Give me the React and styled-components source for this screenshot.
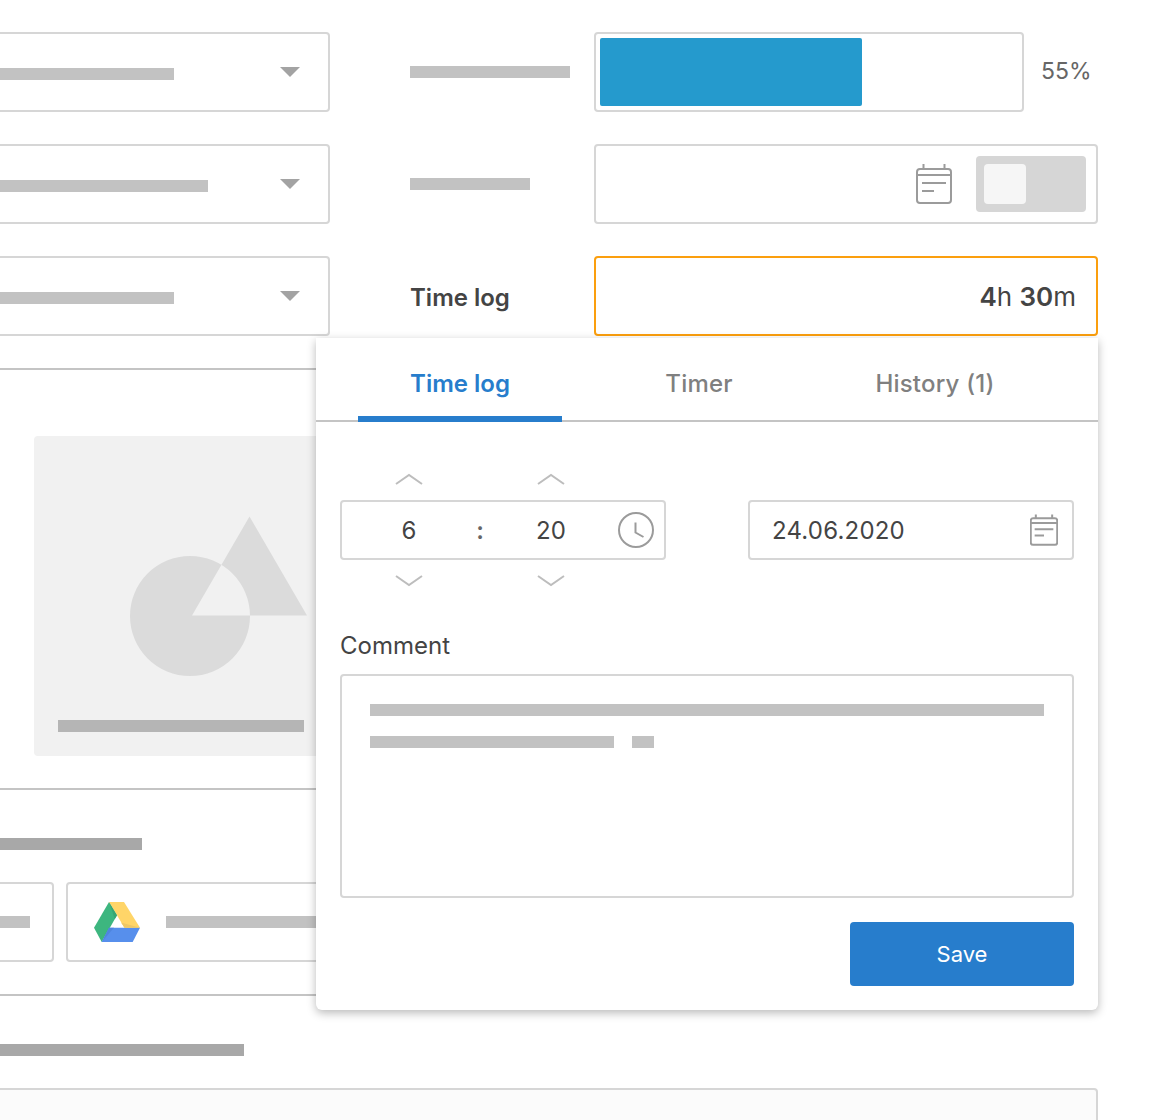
import React from "react";
import styled, { createGlobalStyle } from "styled-components";

const Global = createGlobalStyle`
  html, body { margin: 0; padding: 0; background: #fff; overflow: hidden; }
  body { font-family: Inter, "Noto Sans", sans-serif; color: #444; }
  #root { width: 1150px; height: 1120px; overflow: hidden; }
  * { box-sizing: border-box; }
`;

const Page = styled.div`
  width: 1138px;
  margin-left: -40px;
  padding-top: 32px;
  display: flex;
  flex-direction: column;
`;
const Form = styled.div`
  display: flex;
  flex-direction: column;
  gap: 32px;
`;
const Row = styled.div`
  display: grid;
  grid-template-columns: 370px 264px 1fr;
  align-items: center;
`;
const Select = styled.div`
  height: 80px;
  border: 2px solid #d6d6d6;
  border-radius: 4px;
  background: #fff;
  padding: 4px 28px 0 18px;
  display: flex;
  align-items: center;
  justify-content: space-between;
`;
const LabelCell = styled.div`
  padding-left: 80px;
  display: flex;
`;
const Bar = styled.div`
  width: ${(p) => p.$w}px;
  height: 12px;
  flex: none;
  background: ${(p) => p.$c || "#c2c2c2"};
`;
const Caret = styled.div`
  width: 0;
  height: 0;
  margin-top: -4px;
  border-left: 10px solid transparent;
  border-right: 10px solid transparent;
  border-top: 10px solid #a3a3a3;
`;
const FieldLabel = styled.span`
  font-size: 24px;
  font-weight: 600;
  color: #444;
  line-height: 32px;
  margin-top: 4px;
`;
const ProgressLine = styled.div`
  display: flex;
  align-items: center;
`;
const Box = styled.div`
  height: 80px;
  border: 2px solid ${(p) => (p.$active ? "#fb9f0e" : "#d6d6d6")};
  border-radius: 4px;
  background: #fff;
  display: flex;
  align-items: center;
`;
const ProgressBox = styled(Box)`
  width: 430px;
  padding: 4px;
`;
const Fill = styled.div`
  height: 100%;
  background: #259acd;
  border-radius: 2px;
`;
const Percent = styled.span`
  margin: -2px 0 0 17px;
  font-size: 23px;
  color: #666;
`;
const DateBox = styled(Box)`
  justify-content: flex-end;
  padding-right: 10px;
  gap: 24px;
`;
const Toggle = styled.div`
  width: 110px;
  height: 56px;
  background: #d6d6d6;
  border-radius: 4px;
  padding: 8px;
`;
const Knob = styled.div`
  width: 42px;
  height: 40px;
  background: #f6f6f6;
  border-radius: 4px;
`;
const Anchor = styled.div`
  position: relative;
`;
const TimeBox = styled(Box)`
  justify-content: flex-end;
  padding-right: 20px;
  font-size: 26px;
  color: #444;
`;
const Strong = styled.b`
  font-weight: 600;
`;
const Popover = styled.div`
  position: absolute;
  top: calc(100% + 2px);
  right: 0;
  width: 782px;
  z-index: 5;
  background: #fff;
  border-radius: 0 0 6px 6px;
  box-shadow: 0 3px 10px rgba(0, 0, 0, 0.28);
`;
const Tabs = styled.div`
  height: 84px;
  padding-left: 42px;
  border-bottom: 2px solid #c4c4c4;
  display: grid;
  grid-template-columns: 204px 274px 198px;
`;
const Tab = styled.div`
  height: 84px;
  display: flex;
  align-items: center;
  justify-content: center;
  padding-top: 6px;
  font-size: 24px;
  letter-spacing: ${(p) => (p.$active ? 0 : 0.2)}px;
  font-weight: ${(p) => (p.$active ? 600 : 500)};
  color: ${(p) => (p.$active ? "#277dcc" : "#808080")};
  box-shadow: ${(p) => (p.$active ? "inset 0 -6px 0 #277dcc" : "none")};
`;
const PopBody = styled.div`
  padding: 50px 24px 24px;
  display: flex;
  flex-direction: column;
`;
const Pickers = styled.div`
  display: grid;
  grid-template-columns: 326px 326px;
  justify-content: space-between;
`;
const TimeGroup = styled.div`
  display: flex;
  flex-direction: column;
  gap: 14px;
`;
const Chevrons = styled.div`
  display: grid;
  grid-template-columns: 134px 8px 134px;
  padding-left: 2px;
  height: 14px;
  align-items: center;
`;
const ChevronCell = styled.div`
  display: flex;
  justify-content: center;
  grid-column: ${(p) => p.$col};
`;
const Spinner = styled(Box)`
  height: 60px;
  display: grid;
  grid-template-columns: 134px 8px 134px 36px;
  padding-right: 10px;
  align-items: center;
`;
const Digit = styled.span`
  text-align: center;
  font-size: 24px;
  color: #444;
`;
const Colon = styled(Digit)`
  color: #666;
  font-weight: 600;
`;
const DateField = styled(Box)`
  height: 60px;
  margin-top: 28px;
  padding: 0 14px 0 22px;
  justify-content: space-between;
  font-size: 24px;
  letter-spacing: 0.2px;
  color: #444;
`;
const CommentLabel = styled.div`
  margin-top: 42px;
  line-height: 32px;
  font-size: 24px;
  color: #444;
`;
const Comment = styled.div`
  margin-top: 12px;
  height: 224px;
  border: 2px solid #d6d6d6;
  border-radius: 4px;
  padding: 28px 28px;
  display: flex;
  flex-direction: column;
  gap: 20px;
`;
const CommentLine = styled.div`
  display: flex;
  gap: 18px;
`;
const Save = styled.button`
  margin-top: 24px;
  align-self: flex-end;
  width: 224px;
  height: 64px;
  border: none;
  border-radius: 4px;
  background: #277dcc;
  color: #fff;
  font-family: inherit;
  font-size: 22px;
`;
const Divider = styled.div`
  width: 700px;
  height: 2px;
  background: #c4c4c4;
  margin-top: ${(p) => p.$top}px;
`;
const Panel = styled.div`
  width: 294px;
  height: 320px;
  margin: 66px 0 0 74px;
  padding: 80px 24px 0;
  background: #f1f1f1;
  border-radius: 4px;
  display: flex;
  flex-direction: column;
`;
const Art = styled.svg`
  display: block;
  margin-left: 72px;
  flex: none;
`;
const PanelBar = styled(Bar)`
  margin-top: 44px;
`;
const Heading = styled(Bar)`
  margin-top: 48px;
`;
const Cards = styled.div`
  display: flex;
  gap: 12px;
  margin-top: 32px;
`;
const Card = styled.div`
  height: 80px;
  border: 2px solid #d6d6d6;
  border-radius: 4px;
  padding: 0 ${(p) => p.$right || 24}px 0 26px;
  display: flex;
  align-items: center;
  gap: 26px;
  flex: none;
`;
const BottomBox = styled.div`
  width: 1138px;
  height: 100px;
  margin-top: 32px;
  background: #fbfbfb;
  border: 2px solid #d6d6d6;
  border-radius: 4px;
`;
const Glyph = styled.svg`
  display: block;
  flex: none;
`;

const CalendarIcon = ({ w = 36, h = 40 }) => (
  <Glyph width={w} height={h} viewBox="0 0 36 40" fill="none" stroke="#9b9b9b" strokeWidth="2">
    <rect x="1" y="5" width="34" height="34" rx="3" vectorEffect="non-scaling-stroke" />
    <path d="M1 11H35M7.5 0V5M28.5 0V5M6 19H30M6 27H18" vectorEffect="non-scaling-stroke" />
  </Glyph>
);
const ChevronUp = () => (
  <Glyph width="28" height="12" viewBox="0 0 28 12" fill="none" stroke="#bdbdbd" strokeWidth="2">
    <path d="M1 11L14 2L27 11" />
  </Glyph>
);
const ChevronDown = () => (
  <Glyph width="28" height="12" viewBox="0 0 28 12" fill="none" stroke="#bdbdbd" strokeWidth="2">
    <path d="M1 1L14 10L27 1" />
  </Glyph>
);
const ClockIcon = () => (
  <Glyph width="36" height="36" viewBox="0 0 36 36" fill="none" stroke="#9b9b9b" strokeWidth="2">
    <circle cx="18" cy="18" r="17" />
    <path d="M17.5 10.5V20.5L25.5 25" />
  </Glyph>
);
const DriveIcon = () => (
  <Glyph width="46" height="40" viewBox="0 0 46 40">
    <path d="M15 0L0 25.7L7.7 40L23 13.2Z" fill="#3db67f" />
    <path d="M15 0H30L46 25.7H30.5Z" fill="#ffd568" />
    <path d="M15 25.7H46L38.7 40H7.7Z" fill="#578fec" />
    <path d="M15 0L23 13.2L20.8 17Z" fill="#37a674" />
    <path d="M27 20.5L46 25.7H30.5Z" fill="#eec765" />
    <path d="M15 25.7H20L7.7 40Z" fill="#4f85de" />
  </Glyph>
);

const selects = [194, 228, 194];

export default function App() {
  return (
    <Page>
      <Global />
      <Form>
        <Row>
          <Select>
            <Bar $w={selects[0]} />
            <Caret />
          </Select>
          <LabelCell>
            <Bar $w={160} />
          </LabelCell>
          <ProgressLine>
            <ProgressBox>
              <Fill style={{ width: "62.7%" }} />
            </ProgressBox>
            <Percent>55%</Percent>
          </ProgressLine>
        </Row>
        <Row>
          <Select>
            <Bar $w={selects[1]} />
            <Caret />
          </Select>
          <LabelCell>
            <Bar $w={120} />
          </LabelCell>
          <DateBox>
            <CalendarIcon />
            <Toggle>
              <Knob />
            </Toggle>
          </DateBox>
        </Row>
        <Row>
          <Select>
            <Bar $w={selects[2]} />
            <Caret />
          </Select>
          <LabelCell>
            <FieldLabel>Time log</FieldLabel>
          </LabelCell>
          <Anchor>
            <TimeBox $active>
              <span>
                <Strong>4</Strong>h <Strong>30</Strong>m
              </span>
            </TimeBox>
            <Popover>
              <Tabs>
                <Tab $active>Time log</Tab>
                <Tab>Timer</Tab>
                <Tab>History (1)</Tab>
              </Tabs>
              <PopBody>
                <Pickers>
                  <TimeGroup>
                    <Chevrons>
                      <ChevronCell $col={1}><ChevronUp /></ChevronCell>
                      <ChevronCell $col={3}><ChevronUp /></ChevronCell>
                    </Chevrons>
                    <Spinner>
                      <Digit>6</Digit>
                      <Colon>:</Colon>
                      <Digit>20</Digit>
                      <ClockIcon />
                    </Spinner>
                    <Chevrons>
                      <ChevronCell $col={1}><ChevronDown /></ChevronCell>
                      <ChevronCell $col={3}><ChevronDown /></ChevronCell>
                    </Chevrons>
                  </TimeGroup>
                  <DateField>
                    <span>24.06.2020</span>
                    <CalendarIcon w={28} h={32} />
                  </DateField>
                </Pickers>
                <CommentLabel>Comment</CommentLabel>
                <Comment>
                  <Bar $w={674} />
                  <CommentLine>
                    <Bar $w={244} />
                    <Bar $w={22} />
                  </CommentLine>
                </Comment>
                <Save>Save</Save>
              </PopBody>
            </Popover>
          </Anchor>
        </Row>
      </Form>
      <Divider $top={32} />
      <Panel>
        <Art width="178" height="160" viewBox="0 0 178 160">
          <path
            fillRule="evenodd"
            fill="#dbdbdb"
            d="M0 100a60 60 0 1 0 120 0a60 60 0 1 0 -120 0ZM119.5 0.5L177 99.5H62Z"
          />
        </Art>
        <PanelBar $w={246} $c="#b5b5b5" />
      </Panel>
      <Divider $top={32} />
      <Heading $w={182} $c="#a8a8a8" />
      <Cards>
        <Card $right={22}>
          <Bar $w={42} />
        </Card>
        <Card>
          <DriveIcon />
          <Bar $w={300} />
        </Card>
      </Cards>
      <Divider $top={32} />
      <Heading $w={284} $c="#a8a8a8" />
      <BottomBox />
    </Page>
  );
}
